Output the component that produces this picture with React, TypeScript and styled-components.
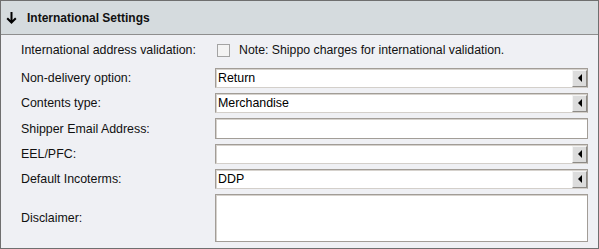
import React from 'react';
import styled, { createGlobalStyle } from 'styled-components';

const GlobalStyle = createGlobalStyle`
  html, body {
    margin: 0;
    padding: 0;
    background: #ffffff;
  }
  body {
    font-family: "Liberation Sans", Arial, sans-serif;
    font-size: 12px;
    color: #000;
  }
`;

type Row = {
  label: string;
  kind: 'select' | 'input' | 'textarea';
  value?: string;
  height?: number;
};

const rows: Row[] = [
  { label: 'Non-delivery option:', kind: 'select', value: 'Return' },
  { label: 'Contents type:', kind: 'select', value: 'Merchandise' },
  { label: 'Shipper Email Address:', kind: 'input', height: 21 },
  { label: 'EEL/PFC:', kind: 'select', value: '' },
  { label: 'Default Incoterms:', kind: 'select', value: 'DDP' },
  { label: 'Disclaimer:', kind: 'textarea', height: 48 },
];

function DownArrow() {
  return (
    <svg width="11" height="13" viewBox="0 0 11 13">
      <path d="M5.5 1 V11.5 M1.2 7.2 L5.5 11.5 L9.8 7.2" stroke="#000" strokeWidth="2" fill="none" />
    </svg>
  );
}

export default function App() {
  return (
    <>
      <GlobalStyle />
      <Panel>
        <Header>
          <DownArrow />
          <Title>International Settings</Title>
        </Header>
        <Body>
          <Line $first>
            <Label>International address validation:</Label>
            <CheckWrap>
              <Check />
              <Note>Note: Shippo charges for international validation.</Note>
            </CheckWrap>
          </Line>
          {rows.map((r) => (
            <Line key={r.label}>
              <Label>{r.label}</Label>
              {r.kind === 'select' && (
                <Select>
                  <SelectText>{r.value}</SelectText>
                  <DropButton>
                    <Tri />
                  </DropButton>
                </Select>
              )}
              {r.kind !== 'select' && <TextBox $h={r.height ?? 20} />}
            </Line>
          ))}
        </Body>
      </Panel>
    </>
  );
}

const Panel = styled.div`
  width: 599px;
  height: 249px;
  box-sizing: border-box;
  border: 1px solid #6f6f6f;
  background: #eff0f4;
  display: flex;
  flex-direction: column;
`;

const Header = styled.div`
  height: 34px;
  flex-shrink: 0;
  box-sizing: border-box;
  background: #d5dbde;
  border-bottom: 1px solid #8e8e8e;
  display: flex;
  align-items: center;
  padding-left: 5px;
  gap: 10px;
`;

const Title = styled.span`
  font-weight: bold;
  font-size: 12px;
  color: #111;
`;

const Body = styled.div`
  padding: 5px 10px 0 20px;
  display: flex;
  flex-direction: column;
  gap: 5px;
`;

const Line = styled.div<{ $first?: boolean }>`
  display: grid;
  grid-template-columns: 194px 1fr;
  align-items: center;
  min-height: 20px;
  margin-bottom: ${(p) => (p.$first ? '3px' : '0')};
`;

const Label = styled.span`
  font-size: 12.4px;
  color: #111;
`;

const CheckWrap = styled.div`
  display: flex;
  align-items: center;
  padding-left: 2px;
`;

const Check = styled.span`
  width: 13px;
  height: 13px;
  box-sizing: border-box;
  border: 1px solid #a3a3a3;
  background: #f3f3f3;
  margin-right: 9px;
`;

const Note = styled.span`
  font-size: 12.3px;
  color: #111;
`;

const Select = styled.div`
  height: 20px;
  box-sizing: border-box;
  background: #fff;
  border: 1px solid #a29d97;
  border-bottom-color: #d3cfca;
  box-shadow: inset 1px 1px 0 #d6d2cd;
  display: flex;
  align-items: center;
  justify-content: space-between;
`;

const SelectText = styled.span`
  padding-left: 2px;
  font-size: 12.4px;
  color: #000;
`;

const DropButton = styled.span`
  width: 15px;
  height: 17px;
  box-sizing: border-box;
  background: #dcdcdc;
  border-top: 1px solid #f4f4f4;
  border-left: 1px solid #f4f4f4;
  border-right: 1px solid #8d8a86;
  border-bottom: 1px solid #8d8a86;
  display: flex;
  align-items: center;
  justify-content: center;
`;

const Tri = styled.span`
  width: 0;
  height: 0;
  border-top: 4px solid transparent;
  border-bottom: 4px solid transparent;
  border-right: 4px solid #000;
`;

const TextBox = styled.div<{ $h: number }>`
  height: ${(p) => p.$h}px;
  box-sizing: border-box;
  background: #fff;
  border: 1px solid #a29d97;
  box-shadow: inset 1px 1px 0 #d6d2cd;
`;
